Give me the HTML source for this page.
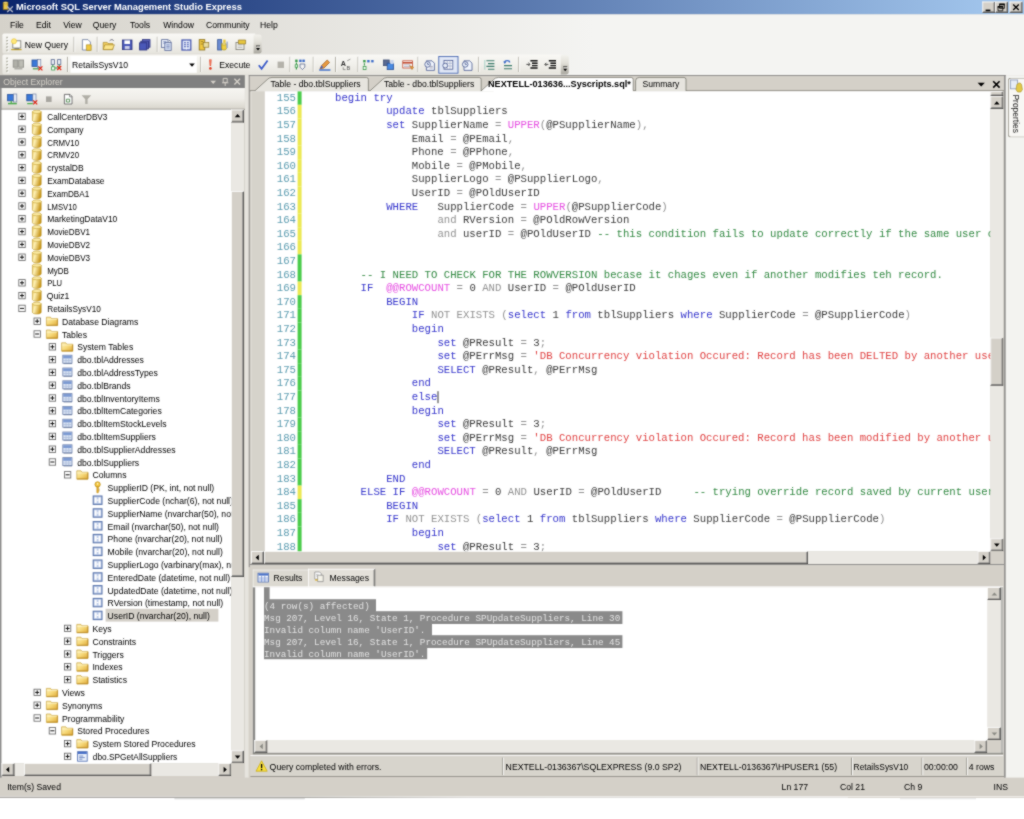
<!DOCTYPE html>
<html><head><meta charset="utf-8"><title>SSMS</title>
<style>
html,body{margin:0;padding:0;background:#fff;overflow:hidden;width:1024px;height:819px;}
#softwrap{position:absolute;left:0;top:0;width:1024px;height:819px;overflow:hidden;filter:url(#soft);}
#root{position:absolute;left:0;top:0;width:1280px;height:1024px;transform:scale(0.8);transform-origin:0 0;background:#fff;overflow:hidden;font-family:"Liberation Sans",sans-serif;font-size:10.8px;color:#000;}
#root div{position:absolute;box-sizing:border-box;}
#root svg{position:absolute;overflow:visible;}
.t{white-space:nowrap;line-height:14px;height:14px;}
.m{white-space:pre;font-family:"Liberation Mono",monospace;}
.sbtn{background:#d4d0c8;border:1px solid;border-color:#fff #404040 #404040 #fff;box-shadow:inset -1px -1px 0 #808080, inset 1px 1px 0 #d4d0c8;}
.track{background:#eae8e3;}
.sunk{border:1px solid;border-color:#808080 #fff #fff #808080;}
.code{color:#3c3c3c}.k{color:#3636cc}.g{color:#929292}.f{color:#e650e2}.c{color:#348a44}.s{color:#e04444}

</style></head>
<body>
<svg width="0" height="0" style="position:absolute"><defs><filter id="soft" x="0" y="0" width="100%" height="100%" color-interpolation-filters="sRGB"><feConvolveMatrix order="3" kernelMatrix="1 2 1 2 13 2 1 2 1" divisor="25" edgeMode="duplicate" preserveAlpha="true"/></filter></defs></svg>
<div id="softwrap"><div id="root">
<div style="left:0px;top:0px;width:1280px;height:997px;background:#d4d0c8;"></div>
<div style="left:0px;top:0px;width:1280px;height:18px;background:linear-gradient(90deg,#0a246a,#a6caf0);"></div>
<svg style="left:2px;top:1px" width="16" height="16" viewBox="0 0 16 16"><path d="M2 2h6v9H2z" fill="#e8c44a" stroke="#8a6a10" stroke-width=".8"/><ellipse cx="5" cy="2.5" rx="3" ry="1.3" fill="#f7e08a" stroke="#8a6a10" stroke-width=".6"/><path d="M7 7l7 7M14 7l-7 7" stroke="#d8dce8" stroke-width="1.6"/><path d="M7 7l7 7M14 7l-7 7" stroke="#606878" stroke-width=".6"/></svg>
<div class="t" style="left:20px;top:2px;color:#fff;font-weight:bold;font-size:11.7px;">Microsoft SQL Server Management Studio Express</div>
<div class="sbtn" style="left:1227.5px;top:2px;width:16px;height:14px;"></div>
<div class="sbtn" style="left:1243.5px;top:2px;width:16px;height:14px;"></div>
<div class="sbtn" style="left:1261.5px;top:2px;width:16px;height:14px;"></div>
<svg style="left:1227.500px;top:2px" width="50" height="14" viewBox="0 0 50 14"><rect x="4" y="10" width="6" height="2" fill="#000"/><path d="M21.5 3.5h6v5h-6z M19.500 6.5h6v5h-6z" fill="#d4d0c8" stroke="#000" stroke-width="1"/><path d="M21 3.500h7M19 6.500h7" stroke="#000" stroke-width="2"/><path d="M38.500 3.500l7 7M45.500 3.500l-7 7" stroke="#000" stroke-width="1.700"/></svg>
<div style="left:0px;top:18px;width:1280px;height:76px;background:linear-gradient(90deg,#d5d2ca 0,#f4f4f2 58%,#f4f4f2 100%);"></div>
<div class="t" style="left:12.5px;top:23.7px;">File</div>
<div class="t" style="left:45px;top:23.7px;">Edit</div>
<div class="t" style="left:79px;top:23.7px;">View</div>
<div class="t" style="left:116px;top:23.7px;">Query</div>
<div class="t" style="left:162.5px;top:23.7px;">Tools</div>
<div class="t" style="left:204px;top:23.7px;">Window</div>
<div class="t" style="left:257.5px;top:23.7px;">Community</div>
<div class="t" style="left:325px;top:23.7px;">Help</div>
<div style="left:3px;top:42px;width:316px;height:25px;background:linear-gradient(#f9f8f5,#f1f0eb 50%,#e6e4dd);border-radius:2px 0 0 2px;"></div>
<div style="left:317px;top:43px;width:10px;height:24px;background:linear-gradient(#f2f1ec,#e2e0d8 40%,#a9a79f);border-radius:0 3px 3px 0;"></div>
<svg style="left:318.500px;top:56px" width="7" height="9" viewBox="0 0 7 9"><path d="M1 1.500h5" stroke="#000"/><path d="M1 4h5l-2.500 3z" fill="#000"/><path d="M2 2.500h5" stroke="#fff" stroke-width=".6"/></svg>
<div style="left:3px;top:68px;width:699px;height:25px;background:linear-gradient(#f9f8f5,#f1f0eb 50%,#e6e4dd);border-radius:2px 0 0 2px;"></div>
<div style="left:701px;top:69px;width:10px;height:24px;background:linear-gradient(#f2f1ec,#e2e0d8 40%,#a9a79f);border-radius:0 3px 3px 0;"></div>
<svg style="left:702.500px;top:82px" width="7" height="9" viewBox="0 0 7 9"><path d="M1 1.500h5" stroke="#000"/><path d="M1 4h5l-2.500 3z" fill="#000"/><path d="M2 2.500h5" stroke="#fff" stroke-width=".6"/></svg>
<div style="left:7.5px;top:46px;width:2px;height:2px;background:#a0a090;"></div>
<div style="left:8.5px;top:47px;width:2px;height:2px;background:#fff;opacity:.8;"></div>
<div style="left:7.5px;top:50px;width:2px;height:2px;background:#a0a090;"></div>
<div style="left:8.5px;top:51px;width:2px;height:2px;background:#fff;opacity:.8;"></div>
<div style="left:7.5px;top:54px;width:2px;height:2px;background:#a0a090;"></div>
<div style="left:8.5px;top:55px;width:2px;height:2px;background:#fff;opacity:.8;"></div>
<div style="left:7.5px;top:58px;width:2px;height:2px;background:#a0a090;"></div>
<div style="left:8.5px;top:59px;width:2px;height:2px;background:#fff;opacity:.8;"></div>
<div style="left:7.5px;top:62px;width:2px;height:2px;background:#a0a090;"></div>
<div style="left:8.5px;top:63px;width:2px;height:2px;background:#fff;opacity:.8;"></div>
<div style="left:7.5px;top:72px;width:2px;height:2px;background:#a0a090;"></div>
<div style="left:8.5px;top:73px;width:2px;height:2px;background:#fff;opacity:.8;"></div>
<div style="left:7.5px;top:76px;width:2px;height:2px;background:#a0a090;"></div>
<div style="left:8.5px;top:77px;width:2px;height:2px;background:#fff;opacity:.8;"></div>
<div style="left:7.5px;top:80px;width:2px;height:2px;background:#a0a090;"></div>
<div style="left:8.5px;top:81px;width:2px;height:2px;background:#fff;opacity:.8;"></div>
<div style="left:7.5px;top:84px;width:2px;height:2px;background:#a0a090;"></div>
<div style="left:8.5px;top:85px;width:2px;height:2px;background:#fff;opacity:.8;"></div>
<div style="left:7.5px;top:88px;width:2px;height:2px;background:#a0a090;"></div>
<div style="left:8.5px;top:89px;width:2px;height:2px;background:#fff;opacity:.8;"></div>
<svg style="left:13.0px;top:47.5px" width="16" height="16" viewBox="0 0 16 16"><rect x="3" y="3" width="10" height="9" fill="#fdfdf8" stroke="#7a7a70"/><path d="M1 14h13" stroke="#c8a830" stroke-width="1.500"/><path d="M5 13h6" stroke="#555" /><circle cx="4.500" cy="3.500" r="3.200" fill="#ffe87a" stroke="#e0b820" stroke-width=".6"/></svg>
<div class="t" style="left:31px;top:48.5px;">New Query</div>
<div style="left:92px;top:46px;width:1px;height:19px;background:#a6a398;"></div>
<div style="left:93px;top:46px;width:1px;height:19px;background:#fff;"></div>
<svg style="left:99.5px;top:47.5px" width="16" height="16" viewBox="0 0 16 16"><path d="M3 1.500h7l3 3v10H3z" fill="#fff" stroke="#6a7a9a"/><path d="M8 8h6v7H8z" fill="#f0c840" stroke="#a88a20" stroke-width=".8"/></svg>
<div style="left:121px;top:46px;width:1px;height:19px;background:#a6a398;"></div>
<div style="left:122px;top:46px;width:1px;height:19px;background:#fff;"></div>
<svg style="left:128.0px;top:47.5px" width="16" height="16" viewBox="0 0 16 16"><path d="M1 5h5l1 1.500h6V14H1z" fill="#f4d060" stroke="#a08020" stroke-width=".8"/><path d="M3 8h12l-2.500 6H1z" fill="#fbe48a" stroke="#a08020" stroke-width=".8"/><path d="M9 3c2-2 4-2 5 0" stroke="#556" fill="none"/></svg>
<svg style="left:151.0px;top:47.5px" width="16" height="16" viewBox="0 0 16 16"><rect x="2" y="2" width="12" height="12" fill="#4a58b8" stroke="#28307a"/><rect x="4.500" y="2.500" width="7" height="4.500" fill="#fff"/><rect x="5" y="9.500" width="6" height="4" fill="#c8cce8"/></svg>
<svg style="left:173.0px;top:47.5px" width="16" height="16" viewBox="0 0 16 16"><rect x="5" y="1.500" width="9.500" height="9.500" fill="#6a70c8" stroke="#28307a"/><rect x="3" y="3.500" width="9.500" height="9.500" fill="#5a62c0" stroke="#28307a"/><rect x="1.500" y="5.500" width="9" height="9" fill="#4a58b8" stroke="#28307a"/></svg>
<div style="left:196px;top:46px;width:1px;height:19px;background:#a6a398;"></div>
<div style="left:197px;top:46px;width:1px;height:19px;background:#fff;"></div>
<svg style="left:199.5px;top:47.5px" width="16" height="16" viewBox="0 0 16 16"><rect x="2" y="1.500" width="8" height="10" fill="#eef2fa" stroke="#5a6a98"/><rect x="6" y="5" width="8" height="10" fill="#d4def2" stroke="#5a6a98"/><path d="M4 4h4M4 6h3M8 8h4M8 10h4M8 12h4" stroke="#6a7ab0" stroke-width=".9"/><path d="M11 2l3 2" stroke="#5a6a98"/></svg>
<svg style="left:224.5px;top:47.5px" width="16" height="16" viewBox="0 0 16 16"><rect x="2.500" y="2" width="11" height="12.500" fill="#dfe8fa" stroke="#4a5ab0" stroke-width="1.600"/><path d="M5 5.500h6M5 8h6M5 10.500h6" stroke="#4a5ab0" stroke-width="1.300"/><path d="M8 3v11" stroke="#fff" stroke-width="1"/></svg>
<svg style="left:247.0px;top:47.5px" width="16" height="16" viewBox="0 0 16 16"><rect x="2" y="1.500" width="7" height="13" fill="#f0c840" stroke="#8a7020"/><rect x="7" y="5" width="7" height="6" fill="#e8dca0" stroke="#8a7020" stroke-width=".8"/><path d="M4 4h3M4 7h3" stroke="#8a7020"/></svg>
<svg style="left:269.5px;top:47.5px" width="16" height="16" viewBox="0 0 16 16"><rect x="2" y="1.500" width="5" height="13" fill="#6a8ad0" stroke="#3a5a98"/><path d="M7 7v6c0 2 6 2 6 0V7z" fill="#f0d040" stroke="#a08a20" stroke-width=".8"/><ellipse cx="10" cy="7" rx="3" ry="1.300" fill="#f8e890" stroke="#a08a20" stroke-width=".6"/><rect x="9" y="1.500" width="3" height="4" fill="#e8c840"/><rect x="13" y="4" width="2" height="8" fill="#a8b4d0"/></svg>
<svg style="left:293.0px;top:47.5px" width="16" height="16" viewBox="0 0 16 16"><rect x="2" y="5" width="10" height="9" fill="#f4f4f0" stroke="#7a7a70"/><path d="M5 2h9v5H5z" fill="#e8c840" stroke="#8a7020" stroke-width=".8"/><path d="M4 8h6M4 11h6" stroke="#999"/></svg>
<svg style="left:15.0px;top:72.5px" width="16" height="16" viewBox="0 0 16 16"><rect x="1.500" y="2" width="6" height="9" fill="#b0b0a8" stroke="#8a8a84"/><rect x="8.500" y="2" width="6" height="9" fill="#bcbcb4" stroke="#8a8a84"/><path d="M3 13h10" stroke="#a0a098" stroke-width="1.500"/></svg>
<svg style="left:38.0px;top:72.5px" width="16" height="16" viewBox="0 0 16 16"><rect x="2" y="2" width="8" height="8" fill="#3a78d8" stroke="#285098"/><rect x="9" y="1.500" width="4" height="10" fill="#e8ecf4" stroke="#6a7aa0" stroke-width=".8"/><path d="M3 13h8" stroke="#4a9a4a" stroke-width="1.500"/><path d="M10 10l5 5M15 10l-5 5" stroke="#e02818" stroke-width="1.600"/></svg>
<svg style="left:62.0px;top:72.5px" width="16" height="16" viewBox="0 0 16 16"><rect x="2" y="1.500" width="4" height="6" fill="#e8ecf4" stroke="#5a6a90"/><rect x="10" y="1.500" width="4" height="6" fill="#e8ecf4" stroke="#5a6a90"/><path d="M4 8v4h8V8" stroke="#3a9a4a" fill="none" stroke-width="1.300"/><rect x="2.500" y="10.500" width="4" height="4" fill="#fff" stroke="#3a9a4a"/><path d="M9.500 9.500l5 5M14.500 9.500l-5 5" stroke="#e02818" stroke-width="1.600"/></svg>
<div style="left:84px;top:71px;width:1px;height:19px;background:#a6a398;"></div>
<div style="left:85px;top:71px;width:1px;height:19px;background:#fff;"></div>
<div style="left:88px;top:70px;width:157.5px;height:21px;background:#fff;"></div>
<div class="t" style="left:90px;top:73.5px;">RetailsSysV10</div>
<svg style="left:236px;top:79px" width="8" height="5" viewBox="0 0 8 5"><path d="M0.500 0.500h7l-3.500 4z" fill="#000"/></svg>
<div style="left:249.5px;top:71px;width:1px;height:19px;background:#a6a398;"></div>
<div style="left:250.5px;top:71px;width:1px;height:19px;background:#fff;"></div>
<svg style="left:254.5px;top:72.5px" width="16" height="16" viewBox="0 0 16 16"><path d="M6.500 1.500h3l-.7 8h-1.600z" fill="#e03a20"/><circle cx="8" cy="12.500" r="1.600" fill="#e03a20"/><path d="M7 2h1l-.2 7" stroke="#f8a080" stroke-width=".8" fill="none"/></svg>
<div class="t" style="left:274px;top:73.5px;">Execute</div>
<svg style="left:321.0px;top:72.5px" width="16" height="16" viewBox="0 0 16 16"><path d="M2.500 8.500l3.500 4.500L13.500 2.500" stroke="#3a5ac8" stroke-width="2.200" fill="none"/></svg>
<svg style="left:343.0px;top:72.5px" width="16" height="16" viewBox="0 0 16 16"><rect x="4" y="4" width="8" height="8" fill="#b4b2aa"/></svg>
<div style="left:362px;top:71px;width:1px;height:19px;background:#a6a398;"></div>
<div style="left:363px;top:71px;width:1px;height:19px;background:#fff;"></div>
<svg style="left:367.0px;top:72.5px" width="16" height="16" viewBox="0 0 16 16"><rect x="2" y="1.500" width="3" height="3" fill="#3a9a4a"/><rect x="7" y="1.500" width="3" height="3" fill="#3a6ac8"/><rect x="11" y="1.500" width="3" height="3" fill="#3a6ac8"/><path d="M3.500 5v3M3.500 10v4" stroke="#3a9a4a" stroke-width="1.500"/><rect x="2" y="8" width="3" height="3" fill="#fff" stroke="#3a9a4a"/><path d="M8 7h6v4l-3 3-3-3z" fill="#f4f4f4" stroke="#5a6a90"/></svg>
<div style="left:391px;top:71px;width:1px;height:19px;background:#a6a398;"></div>
<div style="left:392px;top:71px;width:1px;height:19px;background:#fff;"></div>
<svg style="left:397.5px;top:72.5px" width="16" height="16" viewBox="0 0 16 16"><path d="M2 13l2-4 7-7 3 3-7 7z" fill="#e89a40" stroke="#8a4a10" stroke-width=".8"/><path d="M1 14.500h14" stroke="#3a6ac8" stroke-width="1.800"/><path d="M2 13l2-4 2 2z" fill="#3a5ac8"/></svg>
<div style="left:419px;top:71px;width:1px;height:19px;background:#a6a398;"></div>
<div style="left:420px;top:71px;width:1px;height:19px;background:#fff;"></div>
<svg style="left:424.5px;top:72.5px" width="16" height="16" viewBox="0 0 16 16"><text x="1" y="9" font-family="Liberation Sans" font-size="9" font-weight="bold" fill="#333">A</text><text x="8" y="15" font-family="Liberation Sans" font-size="7" fill="#555">B</text><path d="M9 3l4-2M4 11v3h3" stroke="#666" stroke-width=".8" fill="none"/></svg>
<div style="left:447px;top:71px;width:1px;height:19px;background:#a6a398;"></div>
<div style="left:448px;top:71px;width:1px;height:19px;background:#fff;"></div>
<svg style="left:452.0px;top:72.5px" width="16" height="16" viewBox="0 0 16 16"><rect x="2" y="2" width="3" height="3" fill="#3a9a4a"/><rect x="7" y="2" width="3" height="3" fill="#3a6ac8"/><rect x="12" y="2" width="3" height="3" fill="#3a6ac8"/><path d="M3.500 6v3" stroke="#3a9a4a" stroke-width="1.400"/><rect x="2" y="10" width="3.500" height="4" fill="#fff" stroke="#3a9a4a"/></svg>
<svg style="left:477.5px;top:72.5px" width="16" height="16" viewBox="0 0 16 16"><rect x="1.500" y="2" width="7" height="7" fill="#5a6a90" stroke="#3a4a70"/><rect x="6" y="6" width="8" height="8" fill="#4a8ae0" stroke="#285098"/><rect x="10" y="2" width="4" height="5" fill="#c8d4ec"/></svg>
<svg style="left:501.5px;top:72.5px" width="16" height="16" viewBox="0 0 16 16"><rect x="1.500" y="3" width="12" height="9" fill="#fff" stroke="#c04a30"/><path d="M1.500 5.500h12" stroke="#c04a30" stroke-width="2"/><path d="M3 8h8M3 10h8" stroke="#aab"/><path d="M10 9l3 5 2-3z" fill="#e8a040" stroke="#a05a10" stroke-width=".6"/></svg>
<div style="left:522px;top:71px;width:1px;height:19px;background:#a6a398;"></div>
<div style="left:523px;top:71px;width:1px;height:19px;background:#fff;"></div>
<svg style="left:529.0px;top:72.5px" width="16" height="16" viewBox="0 0 16 16"><path d="M4 3h7l3 3v9H4z" fill="#f0f4fc" stroke="#4a5a90"/><circle cx="5.500" cy="7.500" r="3.500" fill="#e8eef8" stroke="#4a5a90"/><path d="M5.500 5.500v2h2" stroke="#4a5a90" fill="none"/><path d="M8 10h4M8 12h4" stroke="#99a"/></svg>
<div style="left:548px;top:69.5px;width:25px;height:22px;background:#dfe6f5;border:1px solid #3a5aa8;"></div>
<svg style="left:552.0px;top:72.5px" width="16" height="16" viewBox="0 0 16 16"><rect x="3" y="2.500" width="11" height="11" fill="#fff" stroke="#4a5a90"/><path d="M3 6h11M3 9.500h11M7 2.500v11M10.500 2.500v11" stroke="#8a9ac0" stroke-width=".8"/><circle cx="4.500" cy="9" r="3" fill="#e8eef8" stroke="#4a5a90"/></svg>
<svg style="left:576.0px;top:72.5px" width="16" height="16" viewBox="0 0 16 16"><path d="M4 3h7l3 3v9H4z" fill="#f0f4fc" stroke="#4a5a90"/><circle cx="5.500" cy="7.500" r="3.500" fill="#e8eef8" stroke="#4a5a90"/><path d="M5.500 5.500v2h2" stroke="#4a5a90" fill="none"/></svg>
<div style="left:598px;top:71px;width:1px;height:19px;background:#a6a398;"></div>
<div style="left:599px;top:71px;width:1px;height:19px;background:#fff;"></div>
<svg style="left:604.0px;top:72.5px" width="16" height="16" viewBox="0 0 16 16"><path d="M4 3h10M6 6.500h8M4 10h10M6 13.500h8" stroke="#3a7a6a" stroke-width="1.400"/><path d="M2 2v12" stroke="#7ac0b0" stroke-width=".8"/></svg>
<svg style="left:626.0px;top:72.5px" width="16" height="16" viewBox="0 0 16 16"><path d="M4 9h10M4 13h10" stroke="#3a7a6a" stroke-width="1.400"/><path d="M11 5c0-3-6-3-6 0" stroke="#3a6ac8" stroke-width="1.600" fill="none"/><path d="M3 4l2 3 2-3z" fill="#3a6ac8"/></svg>
<div style="left:648px;top:71px;width:1px;height:19px;background:#a6a398;"></div>
<div style="left:649px;top:71px;width:1px;height:19px;background:#fff;"></div>
<svg style="left:657.0px;top:72.5px" width="16" height="16" viewBox="0 0 16 16"><path d="M6 3h9M8 6h7M8 9h7M6 12h9" stroke="#111" stroke-width="1.800"/><path d="M1 7.500h4M3.500 5.500l2 2-2 2" stroke="#222" fill="none"/></svg>
<svg style="left:679.5px;top:72.5px" width="16" height="16" viewBox="0 0 16 16"><path d="M6 3h9M8 6h7M8 9h7M6 12h9" stroke="#111" stroke-width="1.800"/><path d="M1.500 7.500h4M3 5.500l-2 2 2 2" stroke="#222" fill="none"/></svg>
<div style="left:0px;top:972px;width:1280px;height:25px;background:#d4d0c8;"></div>
<div style="left:0px;top:995px;width:1280px;height:1px;background:#f4f3f0;"></div>
<div style="left:0px;top:996px;width:380px;height:1.4px;background:#8c8c88;"></div>
<div style="left:380px;top:996px;width:680px;height:1.4px;background:linear-gradient(90deg,#8c8c88,#ddd 30%,#eee);"></div>
<div class="t" style="left:9px;top:977px;">Item(s) Saved</div>
<div class="t" style="left:977px;top:977px;">Ln 177</div>
<div class="t" style="left:1050px;top:977px;">Col 21</div>
<div class="t" style="left:1130px;top:977px;">Ch 9</div>
<div class="t" style="left:1242px;top:977px;">INS</div>
<div style="left:218px;top:997.5px;width:163px;height:1.5px;background:#aaa;opacity:.7;"></div>
<div style="left:1125px;top:997.5px;width:95px;height:1.2px;background:#ccc;opacity:.7;"></div>
<div style="left:1257px;top:94px;width:23px;height:878px;background:#f3f3f0;"></div>
<div style="left:1260px;top:97px;width:22px;height:75px;background:#f8f7f4;border:1px solid #9a978c;border-right:none;border-radius:4px 0 0 4px;"></div>
<svg style="left:1262px;top:99px" width="18" height="18" viewBox="0 0 18 18"><rect x="1" y="1" width="9" height="11" fill="#e6ecf6" stroke="#8a9ab8"/><path d="M9 7c2-3 5-3 6 0l1 6-2 3h-4l-2-3z" fill="#e2c84a" stroke="#a08a20" stroke-width=".7"/></svg>
<div class="t" style="left:1263px;top:118px;transform:rotate(90deg);transform-origin:0 0;margin-left:14px;font-size:10.6px;color:#222;">Properties</div>
<div style="left:0px;top:94px;width:308px;height:878px;background:#d4d0c8;"></div>
<div style="left:306px;top:94px;width:5px;height:878px;background:#e6e4de;"></div>
<div style="left:0px;top:94px;width:306px;height:16px;background:#808080;"></div>
<div class="t" style="left:4px;top:95px;color:#d4d0c8;">Object Explorer</div>
<svg style="left:262px;top:97px" width="44" height="11" viewBox="0 0 44 11"><path d="M1 4h7l-3.500 4z" fill="#d4d0c8"/><path d="M17 1h5v5h-5zM15.500 6.500h8M19.500 6.500v4" stroke="#d4d0c8" fill="none" stroke-width="1.200"/><path d="M31 1.500l7 7M38 1.500l-7 7" stroke="#d4d0c8" stroke-width="1.700"/></svg>
<div style="left:0px;top:110px;width:306px;height:27px;background:linear-gradient(#f6f5f1,#efede8 50%,#d6d3ca);"></div>
<div style="left:0px;top:135.5px;width:306px;height:1.5px;background:#77756f;"></div>
<div style="left:0px;top:110px;width:2px;height:862px;background:#8e8e8e;"></div>
<svg style="left:8.0px;top:116.0px" width="16" height="16" viewBox="0 0 16 16"><rect x="1.500" y="2" width="8" height="8" fill="#3a78d8" stroke="#285098"/><rect x="9" y="1.500" width="4" height="10" fill="#e8ecf4" stroke="#6a7aa0" stroke-width=".8"/><path d="M2 13.500h11" stroke="#4aaa4a" stroke-width="1.800"/><path d="M6 10v3" stroke="#4aaa4a" stroke-width="1.500"/></svg>
<svg style="left:32.0px;top:116.0px" width="16" height="16" viewBox="0 0 16 16"><rect x="1.500" y="2" width="8" height="8" fill="#3a78d8" stroke="#285098"/><rect x="9" y="1.500" width="4" height="10" fill="#e8ecf4" stroke="#6a7aa0" stroke-width=".8"/><path d="M2 13.500h7" stroke="#4aaa4a" stroke-width="1.500"/><path d="M9.500 9.500l5 5M14.500 9.500l-5 5" stroke="#e02818" stroke-width="1.600"/></svg>
<svg style="left:53.0px;top:116.0px" width="16" height="16" viewBox="0 0 16 16"><rect x="4.500" y="4.500" width="7" height="7" fill="#a8a6a0"/></svg>
<svg style="left:77.0px;top:116.0px" width="16" height="16" viewBox="0 0 16 16"><path d="M3.500 2h7l2.500 2.500V14h-9.500z" fill="#fff" stroke="#555"/><path d="M6 8h4v3.500H6z" fill="none" stroke="#3a7a3a"/><path d="M10 2v3h3" fill="none" stroke="#555" stroke-width=".8"/></svg>
<svg style="left:99.5px;top:116.0px" width="16" height="16" viewBox="0 0 16 16"><path d="M2 3h12l-4.500 5v6h-3V8z" fill="#b0aea6"/></svg>
<div style="left:2px;top:137px;width:287px;height:817px;background:#fff;"></div>
<div class="track" style="left:289px;top:137px;width:16px;height:817px;"></div>
<div class="sbtn" style="left:289px;top:137px;width:16px;height:16px;"></div>
<div class="sbtn" style="left:289px;top:938px;width:16px;height:16px;"></div>
<div class="sbtn" style="left:289px;top:239px;width:16px;height:482px;"></div>
<svg style="left:293px;top:142px" width="8" height="5" viewBox="0 0 8 5"><path d="M0.500 4.500h7l-3.500-4z" fill="#000"/></svg>
<svg style="left:293px;top:944px" width="8" height="5" viewBox="0 0 8 5"><path d="M0.500 0.500h7l-3.500 4z" fill="#000"/></svg>
<div class="track" style="left:2px;top:954px;width:287px;height:16px;"></div>
<div class="sbtn" style="left:2px;top:954px;width:16px;height:16px;"></div>
<div class="sbtn" style="left:273px;top:954px;width:16px;height:16px;"></div>
<div class="sbtn" style="left:30px;top:954px;width:159px;height:16px;"></div>
<svg style="left:7px;top:958px" width="5" height="8" viewBox="0 0 5 8"><path d="M4.500 0.500v7l-4-3.500z" fill="#000"/></svg>
<svg style="left:279px;top:958px" width="5" height="8" viewBox="0 0 5 8"><path d="M0.500 0.500v7l4-3.500z" fill="#000"/></svg>
<div style="left:289px;top:954px;width:16px;height:16px;background:#d4d0c8;"></div>
<svg width="0" height="0" style="left:0;top:0"><defs><linearGradient id="gdb" x1="0" x2="1" y1="0" y2="0.300"><stop offset="0" stop-color="#f2d060"/><stop offset=".35" stop-color="#fdf0b4"/><stop offset="1" stop-color="#c8961c"/></linearGradient><linearGradient id="gfo" x1="0" x2="1" y1="0" y2="1"><stop offset="0" stop-color="#fff4c0"/><stop offset=".5" stop-color="#f6d878"/><stop offset="1" stop-color="#dca636"/></linearGradient></defs></svg>
<div style="left:2px;top:137px;width:287px;height:817px;overflow:hidden;">
<svg style="left:21px;top:4px" width="9" height="9" viewBox="0 0 9 9"><rect x=".5" y=".5" width="8" height="8" fill="#fff" stroke="#606060"/><path d="M2 4.500h5M4.500 2v5" stroke="#000" stroke-width="1.200"/></svg>
<svg style="left:36px;top:0px" width="16" height="16" viewBox="0 0 16 16"><path d="M2.500 2.800v10.400c0 1.500 2.400 2.300 5.500 2.300s5.500-.8 5.500-2.300V2.800z" fill="url(#gdb)" stroke="#b8901c" stroke-width=".7"/><ellipse cx="8" cy="2.800" rx="5.500" ry="2" fill="#fbeaa4" stroke="#c09a28" stroke-width=".7"/></svg>
<div class="t" style="left:56.5px;top:2px;transform:scaleX(0.95);transform-origin:0 0;">CallCenterDBV3</div>
<svg style="left:21px;top:20px" width="9" height="9" viewBox="0 0 9 9"><rect x=".5" y=".5" width="8" height="8" fill="#fff" stroke="#606060"/><path d="M2 4.500h5M4.500 2v5" stroke="#000" stroke-width="1.200"/></svg>
<svg style="left:36px;top:16px" width="16" height="16" viewBox="0 0 16 16"><path d="M2.500 2.800v10.400c0 1.500 2.400 2.300 5.500 2.300s5.500-.8 5.500-2.300V2.800z" fill="url(#gdb)" stroke="#b8901c" stroke-width=".7"/><ellipse cx="8" cy="2.800" rx="5.500" ry="2" fill="#fbeaa4" stroke="#c09a28" stroke-width=".7"/></svg>
<div class="t" style="left:56.5px;top:18px;transform:scaleX(0.985);transform-origin:0 0;">Company</div>
<svg style="left:21px;top:36px" width="9" height="9" viewBox="0 0 9 9"><rect x=".5" y=".5" width="8" height="8" fill="#fff" stroke="#606060"/><path d="M2 4.500h5M4.500 2v5" stroke="#000" stroke-width="1.200"/></svg>
<svg style="left:36px;top:32px" width="16" height="16" viewBox="0 0 16 16"><path d="M2.500 2.800v10.400c0 1.500 2.400 2.300 5.500 2.300s5.500-.8 5.500-2.300V2.800z" fill="url(#gdb)" stroke="#b8901c" stroke-width=".7"/><ellipse cx="8" cy="2.800" rx="5.500" ry="2" fill="#fbeaa4" stroke="#c09a28" stroke-width=".7"/></svg>
<div class="t" style="left:56.5px;top:34px;transform:scaleX(0.91);transform-origin:0 0;">CRMV10</div>
<svg style="left:21px;top:52px" width="9" height="9" viewBox="0 0 9 9"><rect x=".5" y=".5" width="8" height="8" fill="#fff" stroke="#606060"/><path d="M2 4.500h5M4.500 2v5" stroke="#000" stroke-width="1.200"/></svg>
<svg style="left:36px;top:48px" width="16" height="16" viewBox="0 0 16 16"><path d="M2.500 2.800v10.400c0 1.500 2.400 2.300 5.500 2.300s5.500-.8 5.500-2.300V2.800z" fill="url(#gdb)" stroke="#b8901c" stroke-width=".7"/><ellipse cx="8" cy="2.800" rx="5.500" ry="2" fill="#fbeaa4" stroke="#c09a28" stroke-width=".7"/></svg>
<div class="t" style="left:56.5px;top:50px;transform:scaleX(0.91);transform-origin:0 0;">CRMV20</div>
<svg style="left:21px;top:68px" width="9" height="9" viewBox="0 0 9 9"><rect x=".5" y=".5" width="8" height="8" fill="#fff" stroke="#606060"/><path d="M2 4.500h5M4.500 2v5" stroke="#000" stroke-width="1.200"/></svg>
<svg style="left:36px;top:64px" width="16" height="16" viewBox="0 0 16 16"><path d="M2.500 2.800v10.400c0 1.500 2.400 2.300 5.500 2.300s5.500-.8 5.500-2.300V2.800z" fill="url(#gdb)" stroke="#b8901c" stroke-width=".7"/><ellipse cx="8" cy="2.800" rx="5.500" ry="2" fill="#fbeaa4" stroke="#c09a28" stroke-width=".7"/></svg>
<div class="t" style="left:56.5px;top:66px;transform:scaleX(0.985);transform-origin:0 0;">crystalDB</div>
<svg style="left:21px;top:84px" width="9" height="9" viewBox="0 0 9 9"><rect x=".5" y=".5" width="8" height="8" fill="#fff" stroke="#606060"/><path d="M2 4.500h5M4.500 2v5" stroke="#000" stroke-width="1.200"/></svg>
<svg style="left:36px;top:80px" width="16" height="16" viewBox="0 0 16 16"><path d="M2.500 2.800v10.400c0 1.500 2.400 2.300 5.500 2.300s5.500-.8 5.500-2.300V2.800z" fill="url(#gdb)" stroke="#b8901c" stroke-width=".7"/><ellipse cx="8" cy="2.800" rx="5.500" ry="2" fill="#fbeaa4" stroke="#c09a28" stroke-width=".7"/></svg>
<div class="t" style="left:56.5px;top:82px;transform:scaleX(0.97);transform-origin:0 0;">ExamDatabase</div>
<svg style="left:21px;top:100px" width="9" height="9" viewBox="0 0 9 9"><rect x=".5" y=".5" width="8" height="8" fill="#fff" stroke="#606060"/><path d="M2 4.500h5M4.500 2v5" stroke="#000" stroke-width="1.200"/></svg>
<svg style="left:36px;top:96px" width="16" height="16" viewBox="0 0 16 16"><path d="M2.500 2.800v10.400c0 1.500 2.400 2.300 5.500 2.300s5.500-.8 5.500-2.300V2.800z" fill="url(#gdb)" stroke="#b8901c" stroke-width=".7"/><ellipse cx="8" cy="2.800" rx="5.500" ry="2" fill="#fbeaa4" stroke="#c09a28" stroke-width=".7"/></svg>
<div class="t" style="left:56.5px;top:98px;transform:scaleX(0.94);transform-origin:0 0;">ExamDBA1</div>
<svg style="left:21px;top:116px" width="9" height="9" viewBox="0 0 9 9"><rect x=".5" y=".5" width="8" height="8" fill="#fff" stroke="#606060"/><path d="M2 4.500h5M4.500 2v5" stroke="#000" stroke-width="1.200"/></svg>
<svg style="left:36px;top:112px" width="16" height="16" viewBox="0 0 16 16"><path d="M2.500 2.800v10.400c0 1.500 2.400 2.300 5.500 2.300s5.500-.8 5.500-2.300V2.800z" fill="url(#gdb)" stroke="#b8901c" stroke-width=".7"/><ellipse cx="8" cy="2.800" rx="5.500" ry="2" fill="#fbeaa4" stroke="#c09a28" stroke-width=".7"/></svg>
<div class="t" style="left:56.5px;top:114px;transform:scaleX(0.89);transform-origin:0 0;">LMSV10</div>
<svg style="left:21px;top:132px" width="9" height="9" viewBox="0 0 9 9"><rect x=".5" y=".5" width="8" height="8" fill="#fff" stroke="#606060"/><path d="M2 4.500h5M4.500 2v5" stroke="#000" stroke-width="1.200"/></svg>
<svg style="left:36px;top:128px" width="16" height="16" viewBox="0 0 16 16"><path d="M2.500 2.800v10.400c0 1.500 2.400 2.300 5.500 2.300s5.500-.8 5.500-2.300V2.800z" fill="url(#gdb)" stroke="#b8901c" stroke-width=".7"/><ellipse cx="8" cy="2.800" rx="5.500" ry="2" fill="#fbeaa4" stroke="#c09a28" stroke-width=".7"/></svg>
<div class="t" style="left:56.5px;top:130px;transform:scaleX(0.98);transform-origin:0 0;">MarketingDataV10</div>
<svg style="left:21px;top:148px" width="9" height="9" viewBox="0 0 9 9"><rect x=".5" y=".5" width="8" height="8" fill="#fff" stroke="#606060"/><path d="M2 4.500h5M4.500 2v5" stroke="#000" stroke-width="1.200"/></svg>
<svg style="left:36px;top:144px" width="16" height="16" viewBox="0 0 16 16"><path d="M2.500 2.800v10.400c0 1.500 2.400 2.300 5.500 2.300s5.500-.8 5.500-2.300V2.800z" fill="url(#gdb)" stroke="#b8901c" stroke-width=".7"/><ellipse cx="8" cy="2.800" rx="5.500" ry="2" fill="#fbeaa4" stroke="#c09a28" stroke-width=".7"/></svg>
<div class="t" style="left:56.5px;top:146px;transform:scaleX(0.94);transform-origin:0 0;">MovieDBV1</div>
<svg style="left:21px;top:164px" width="9" height="9" viewBox="0 0 9 9"><rect x=".5" y=".5" width="8" height="8" fill="#fff" stroke="#606060"/><path d="M2 4.500h5M4.500 2v5" stroke="#000" stroke-width="1.200"/></svg>
<svg style="left:36px;top:160px" width="16" height="16" viewBox="0 0 16 16"><path d="M2.500 2.800v10.400c0 1.500 2.400 2.300 5.500 2.300s5.500-.8 5.500-2.300V2.800z" fill="url(#gdb)" stroke="#b8901c" stroke-width=".7"/><ellipse cx="8" cy="2.800" rx="5.500" ry="2" fill="#fbeaa4" stroke="#c09a28" stroke-width=".7"/></svg>
<div class="t" style="left:56.5px;top:162px;transform:scaleX(0.94);transform-origin:0 0;">MovieDBV2</div>
<svg style="left:21px;top:180px" width="9" height="9" viewBox="0 0 9 9"><rect x=".5" y=".5" width="8" height="8" fill="#fff" stroke="#606060"/><path d="M2 4.500h5M4.500 2v5" stroke="#000" stroke-width="1.200"/></svg>
<svg style="left:36px;top:176px" width="16" height="16" viewBox="0 0 16 16"><path d="M2.500 2.800v10.400c0 1.500 2.400 2.300 5.500 2.300s5.500-.8 5.500-2.300V2.800z" fill="url(#gdb)" stroke="#b8901c" stroke-width=".7"/><ellipse cx="8" cy="2.800" rx="5.500" ry="2" fill="#fbeaa4" stroke="#c09a28" stroke-width=".7"/></svg>
<div class="t" style="left:56.5px;top:178px;transform:scaleX(0.94);transform-origin:0 0;">MovieDBV3</div>
<svg style="left:36px;top:192px" width="16" height="16" viewBox="0 0 16 16"><path d="M2.500 2.800v10.400c0 1.500 2.400 2.300 5.500 2.300s5.500-.8 5.500-2.300V2.800z" fill="url(#gdb)" stroke="#b8901c" stroke-width=".7"/><ellipse cx="8" cy="2.800" rx="5.500" ry="2" fill="#fbeaa4" stroke="#c09a28" stroke-width=".7"/></svg>
<div class="t" style="left:56.5px;top:194px;transform:scaleX(0.92);transform-origin:0 0;">MyDB</div>
<svg style="left:21px;top:212px" width="9" height="9" viewBox="0 0 9 9"><rect x=".5" y=".5" width="8" height="8" fill="#fff" stroke="#606060"/><path d="M2 4.500h5M4.500 2v5" stroke="#000" stroke-width="1.200"/></svg>
<svg style="left:36px;top:208px" width="16" height="16" viewBox="0 0 16 16"><path d="M2.500 2.800v10.400c0 1.500 2.400 2.300 5.500 2.300s5.500-.8 5.500-2.300V2.800z" fill="url(#gdb)" stroke="#b8901c" stroke-width=".7"/><ellipse cx="8" cy="2.800" rx="5.500" ry="2" fill="#fbeaa4" stroke="#c09a28" stroke-width=".7"/></svg>
<div class="t" style="left:56.5px;top:210px;transform:scaleX(0.88);transform-origin:0 0;">PLU</div>
<svg style="left:21px;top:228px" width="9" height="9" viewBox="0 0 9 9"><rect x=".5" y=".5" width="8" height="8" fill="#fff" stroke="#606060"/><path d="M2 4.500h5M4.500 2v5" stroke="#000" stroke-width="1.200"/></svg>
<svg style="left:36px;top:224px" width="16" height="16" viewBox="0 0 16 16"><path d="M2.500 2.800v10.400c0 1.500 2.400 2.300 5.500 2.300s5.500-.8 5.500-2.300V2.800z" fill="url(#gdb)" stroke="#b8901c" stroke-width=".7"/><ellipse cx="8" cy="2.800" rx="5.500" ry="2" fill="#fbeaa4" stroke="#c09a28" stroke-width=".7"/></svg>
<div class="t" style="left:56.5px;top:226px;">Quiz1</div>
<svg style="left:21px;top:244px" width="9" height="9" viewBox="0 0 9 9"><rect x=".5" y=".5" width="8" height="8" fill="#fff" stroke="#606060"/><path d="M2 4.500h5" stroke="#000" stroke-width="1.200"/></svg>
<svg style="left:36px;top:240px" width="16" height="16" viewBox="0 0 16 16"><path d="M2.500 2.800v10.400c0 1.500 2.400 2.300 5.500 2.300s5.500-.8 5.500-2.300V2.800z" fill="url(#gdb)" stroke="#b8901c" stroke-width=".7"/><ellipse cx="8" cy="2.800" rx="5.500" ry="2" fill="#fbeaa4" stroke="#c09a28" stroke-width=".7"/></svg>
<div class="t" style="left:56.5px;top:242px;transform:scaleX(0.955);transform-origin:0 0;">RetailsSysV10</div>
<svg style="left:40px;top:260px" width="9" height="9" viewBox="0 0 9 9"><rect x=".5" y=".5" width="8" height="8" fill="#fff" stroke="#606060"/><path d="M2 4.500h5M4.500 2v5" stroke="#000" stroke-width="1.200"/></svg>
<svg style="left:55px;top:256px" width="16" height="16" viewBox="0 0 16 16"><path d="M1 3.500h5.200l1.300 1.800H15V14H1z" fill="url(#gfo)" stroke="#c29a30" stroke-width=".8"/><path d="M1.500 6.200h13" stroke="#fff6cc" stroke-width=".9"/><path d="M1.500 13.600h13.200V6" stroke="#b88620" stroke-width=".9" fill="none"/></svg>
<div class="t" style="left:75.5px;top:258px;">Database Diagrams</div>
<svg style="left:40px;top:276px" width="9" height="9" viewBox="0 0 9 9"><rect x=".5" y=".5" width="8" height="8" fill="#fff" stroke="#606060"/><path d="M2 4.500h5" stroke="#000" stroke-width="1.200"/></svg>
<svg style="left:55px;top:272px" width="16" height="16" viewBox="0 0 16 16"><path d="M1 3.500h5.200l1.300 1.800H15V14H1z" fill="url(#gfo)" stroke="#c29a30" stroke-width=".8"/><path d="M1.500 6.200h13" stroke="#fff6cc" stroke-width=".9"/><path d="M1.500 13.600h13.200V6" stroke="#b88620" stroke-width=".9" fill="none"/></svg>
<div class="t" style="left:75.5px;top:274px;">Tables</div>
<svg style="left:59px;top:292px" width="9" height="9" viewBox="0 0 9 9"><rect x=".5" y=".5" width="8" height="8" fill="#fff" stroke="#606060"/><path d="M2 4.500h5M4.500 2v5" stroke="#000" stroke-width="1.200"/></svg>
<svg style="left:74px;top:288px" width="16" height="16" viewBox="0 0 16 16"><path d="M1 3.500h5.200l1.300 1.800H15V14H1z" fill="url(#gfo)" stroke="#c29a30" stroke-width=".8"/><path d="M1.500 6.200h13" stroke="#fff6cc" stroke-width=".9"/><path d="M1.500 13.600h13.200V6" stroke="#b88620" stroke-width=".9" fill="none"/></svg>
<div class="t" style="left:94.5px;top:290px;">System Tables</div>
<svg style="left:59px;top:308px" width="9" height="9" viewBox="0 0 9 9"><rect x=".5" y=".5" width="8" height="8" fill="#fff" stroke="#606060"/><path d="M2 4.500h5M4.500 2v5" stroke="#000" stroke-width="1.200"/></svg>
<svg style="left:74px;top:304px" width="16" height="16" viewBox="0 0 16 16"><rect x="2.500" y="3" width="11.500" height="10" fill="#dde6f5" stroke="#6f82ac" stroke-width="1"/><rect x="3" y="3.500" width="10.500" height="3.500" fill="#7c9ad2"/><path d="M3 9.800h10.500M6.500 7v6M10 7v6" stroke="#a4b6d8" stroke-width=".9"/><path d="M3.500 13.500h10.500" stroke="#56688e" stroke-width=".8"/></svg>
<div class="t" style="left:94.5px;top:306px;">dbo.tblAddresses</div>
<svg style="left:59px;top:324px" width="9" height="9" viewBox="0 0 9 9"><rect x=".5" y=".5" width="8" height="8" fill="#fff" stroke="#606060"/><path d="M2 4.500h5M4.500 2v5" stroke="#000" stroke-width="1.200"/></svg>
<svg style="left:74px;top:320px" width="16" height="16" viewBox="0 0 16 16"><rect x="2.500" y="3" width="11.500" height="10" fill="#dde6f5" stroke="#6f82ac" stroke-width="1"/><rect x="3" y="3.500" width="10.500" height="3.500" fill="#7c9ad2"/><path d="M3 9.800h10.500M6.500 7v6M10 7v6" stroke="#a4b6d8" stroke-width=".9"/><path d="M3.500 13.500h10.500" stroke="#56688e" stroke-width=".8"/></svg>
<div class="t" style="left:94.5px;top:322px;">dbo.tblAddressTypes</div>
<svg style="left:59px;top:340px" width="9" height="9" viewBox="0 0 9 9"><rect x=".5" y=".5" width="8" height="8" fill="#fff" stroke="#606060"/><path d="M2 4.500h5M4.500 2v5" stroke="#000" stroke-width="1.200"/></svg>
<svg style="left:74px;top:336px" width="16" height="16" viewBox="0 0 16 16"><rect x="2.500" y="3" width="11.500" height="10" fill="#dde6f5" stroke="#6f82ac" stroke-width="1"/><rect x="3" y="3.500" width="10.500" height="3.500" fill="#7c9ad2"/><path d="M3 9.800h10.500M6.500 7v6M10 7v6" stroke="#a4b6d8" stroke-width=".9"/><path d="M3.500 13.500h10.500" stroke="#56688e" stroke-width=".8"/></svg>
<div class="t" style="left:94.5px;top:338px;">dbo.tblBrands</div>
<svg style="left:59px;top:356px" width="9" height="9" viewBox="0 0 9 9"><rect x=".5" y=".5" width="8" height="8" fill="#fff" stroke="#606060"/><path d="M2 4.500h5M4.500 2v5" stroke="#000" stroke-width="1.200"/></svg>
<svg style="left:74px;top:352px" width="16" height="16" viewBox="0 0 16 16"><rect x="2.500" y="3" width="11.500" height="10" fill="#dde6f5" stroke="#6f82ac" stroke-width="1"/><rect x="3" y="3.500" width="10.500" height="3.500" fill="#7c9ad2"/><path d="M3 9.800h10.500M6.500 7v6M10 7v6" stroke="#a4b6d8" stroke-width=".9"/><path d="M3.500 13.500h10.500" stroke="#56688e" stroke-width=".8"/></svg>
<div class="t" style="left:94.5px;top:354px;">dbo.tblInventoryItems</div>
<svg style="left:59px;top:372px" width="9" height="9" viewBox="0 0 9 9"><rect x=".5" y=".5" width="8" height="8" fill="#fff" stroke="#606060"/><path d="M2 4.500h5M4.500 2v5" stroke="#000" stroke-width="1.200"/></svg>
<svg style="left:74px;top:368px" width="16" height="16" viewBox="0 0 16 16"><rect x="2.500" y="3" width="11.500" height="10" fill="#dde6f5" stroke="#6f82ac" stroke-width="1"/><rect x="3" y="3.500" width="10.500" height="3.500" fill="#7c9ad2"/><path d="M3 9.800h10.500M6.500 7v6M10 7v6" stroke="#a4b6d8" stroke-width=".9"/><path d="M3.500 13.500h10.500" stroke="#56688e" stroke-width=".8"/></svg>
<div class="t" style="left:94.5px;top:370px;">dbo.tblItemCategories</div>
<svg style="left:59px;top:388px" width="9" height="9" viewBox="0 0 9 9"><rect x=".5" y=".5" width="8" height="8" fill="#fff" stroke="#606060"/><path d="M2 4.500h5M4.500 2v5" stroke="#000" stroke-width="1.200"/></svg>
<svg style="left:74px;top:384px" width="16" height="16" viewBox="0 0 16 16"><rect x="2.500" y="3" width="11.500" height="10" fill="#dde6f5" stroke="#6f82ac" stroke-width="1"/><rect x="3" y="3.500" width="10.500" height="3.500" fill="#7c9ad2"/><path d="M3 9.800h10.500M6.500 7v6M10 7v6" stroke="#a4b6d8" stroke-width=".9"/><path d="M3.500 13.500h10.500" stroke="#56688e" stroke-width=".8"/></svg>
<div class="t" style="left:94.5px;top:386px;">dbo.tblItemStockLevels</div>
<svg style="left:59px;top:404px" width="9" height="9" viewBox="0 0 9 9"><rect x=".5" y=".5" width="8" height="8" fill="#fff" stroke="#606060"/><path d="M2 4.500h5M4.500 2v5" stroke="#000" stroke-width="1.200"/></svg>
<svg style="left:74px;top:400px" width="16" height="16" viewBox="0 0 16 16"><rect x="2.500" y="3" width="11.500" height="10" fill="#dde6f5" stroke="#6f82ac" stroke-width="1"/><rect x="3" y="3.500" width="10.500" height="3.500" fill="#7c9ad2"/><path d="M3 9.800h10.500M6.500 7v6M10 7v6" stroke="#a4b6d8" stroke-width=".9"/><path d="M3.500 13.500h10.500" stroke="#56688e" stroke-width=".8"/></svg>
<div class="t" style="left:94.5px;top:402px;">dbo.tblItemSuppliers</div>
<svg style="left:59px;top:420px" width="9" height="9" viewBox="0 0 9 9"><rect x=".5" y=".5" width="8" height="8" fill="#fff" stroke="#606060"/><path d="M2 4.500h5M4.500 2v5" stroke="#000" stroke-width="1.200"/></svg>
<svg style="left:74px;top:416px" width="16" height="16" viewBox="0 0 16 16"><rect x="2.500" y="3" width="11.500" height="10" fill="#dde6f5" stroke="#6f82ac" stroke-width="1"/><rect x="3" y="3.500" width="10.500" height="3.500" fill="#7c9ad2"/><path d="M3 9.800h10.500M6.500 7v6M10 7v6" stroke="#a4b6d8" stroke-width=".9"/><path d="M3.500 13.500h10.500" stroke="#56688e" stroke-width=".8"/></svg>
<div class="t" style="left:94.5px;top:418px;">dbo.tblSupplierAddresses</div>
<svg style="left:59px;top:436px" width="9" height="9" viewBox="0 0 9 9"><rect x=".5" y=".5" width="8" height="8" fill="#fff" stroke="#606060"/><path d="M2 4.500h5" stroke="#000" stroke-width="1.200"/></svg>
<svg style="left:74px;top:432px" width="16" height="16" viewBox="0 0 16 16"><rect x="2.500" y="3" width="11.500" height="10" fill="#dde6f5" stroke="#6f82ac" stroke-width="1"/><rect x="3" y="3.500" width="10.500" height="3.500" fill="#7c9ad2"/><path d="M3 9.800h10.500M6.500 7v6M10 7v6" stroke="#a4b6d8" stroke-width=".9"/><path d="M3.500 13.500h10.500" stroke="#56688e" stroke-width=".8"/></svg>
<div class="t" style="left:94.5px;top:434px;">dbo.tblSuppliers</div>
<svg style="left:78px;top:452px" width="9" height="9" viewBox="0 0 9 9"><rect x=".5" y=".5" width="8" height="8" fill="#fff" stroke="#606060"/><path d="M2 4.500h5" stroke="#000" stroke-width="1.200"/></svg>
<svg style="left:93px;top:448px" width="16" height="16" viewBox="0 0 16 16"><path d="M1 3.500h5.200l1.300 1.800H15V14H1z" fill="url(#gfo)" stroke="#c29a30" stroke-width=".8"/><path d="M1.500 6.200h13" stroke="#fff6cc" stroke-width=".9"/><path d="M1.500 13.600h13.200V6" stroke="#b88620" stroke-width=".9" fill="none"/></svg>
<div class="t" style="left:113.5px;top:450px;">Columns</div>
<svg style="left:112px;top:464px" width="16" height="16" viewBox="0 0 16 16"><circle cx="8" cy="4.500" r="3.300" fill="#f6c840" stroke="#b88a18" stroke-width=".9"/><circle cx="8" cy="3.800" r="1" fill="#fff8d0"/><path d="M7 7.500h2v7l-1 1-1-1z" fill="#e8b030" stroke="#b88a18" stroke-width=".6"/><path d="M9 10.500h1.500M9 12.500h1.500" stroke="#b88a18"/></svg>
<div class="t" style="left:132.5px;top:466px;">SupplierID (PK, int, not null)</div>
<svg style="left:112px;top:480px" width="16" height="16" viewBox="0 0 16 16"><rect x="2.500" y="3" width="11" height="10.500" fill="#bccbe8" stroke="#5873aa" stroke-width="1.300"/><rect x="4.200" y="4.800" width="2.600" height="6.900" fill="#fff"/><rect x="9.200" y="4.800" width="2.600" height="6.900" fill="#fff"/><path d="M6.800 8.200h2.400" stroke="#fff" stroke-width="1.400"/></svg>
<div class="t" style="left:132.5px;top:482px;">SupplierCode (nchar(6), not null)</div>
<svg style="left:112px;top:496px" width="16" height="16" viewBox="0 0 16 16"><rect x="2.500" y="3" width="11" height="10.500" fill="#bccbe8" stroke="#5873aa" stroke-width="1.300"/><rect x="4.200" y="4.800" width="2.600" height="6.900" fill="#fff"/><rect x="9.200" y="4.800" width="2.600" height="6.900" fill="#fff"/><path d="M6.800 8.200h2.400" stroke="#fff" stroke-width="1.400"/></svg>
<div class="t" style="left:132.5px;top:498px;">SupplierName (nvarchar(50), not null)</div>
<svg style="left:112px;top:512px" width="16" height="16" viewBox="0 0 16 16"><rect x="2.500" y="3" width="11" height="10.500" fill="#bccbe8" stroke="#5873aa" stroke-width="1.300"/><rect x="4.200" y="4.800" width="2.600" height="6.900" fill="#fff"/><rect x="9.200" y="4.800" width="2.600" height="6.900" fill="#fff"/><path d="M6.800 8.200h2.400" stroke="#fff" stroke-width="1.400"/></svg>
<div class="t" style="left:132.5px;top:514px;">Email (nvarchar(50), not null)</div>
<svg style="left:112px;top:528px" width="16" height="16" viewBox="0 0 16 16"><rect x="2.500" y="3" width="11" height="10.500" fill="#bccbe8" stroke="#5873aa" stroke-width="1.300"/><rect x="4.200" y="4.800" width="2.600" height="6.900" fill="#fff"/><rect x="9.200" y="4.800" width="2.600" height="6.900" fill="#fff"/><path d="M6.800 8.200h2.400" stroke="#fff" stroke-width="1.400"/></svg>
<div class="t" style="left:132.5px;top:530px;">Phone (nvarchar(20), not null)</div>
<svg style="left:112px;top:544px" width="16" height="16" viewBox="0 0 16 16"><rect x="2.500" y="3" width="11" height="10.500" fill="#bccbe8" stroke="#5873aa" stroke-width="1.300"/><rect x="4.200" y="4.800" width="2.600" height="6.900" fill="#fff"/><rect x="9.200" y="4.800" width="2.600" height="6.900" fill="#fff"/><path d="M6.800 8.200h2.400" stroke="#fff" stroke-width="1.400"/></svg>
<div class="t" style="left:132.5px;top:546px;">Mobile (nvarchar(20), not null)</div>
<svg style="left:112px;top:560px" width="16" height="16" viewBox="0 0 16 16"><rect x="2.500" y="3" width="11" height="10.500" fill="#bccbe8" stroke="#5873aa" stroke-width="1.300"/><rect x="4.200" y="4.800" width="2.600" height="6.900" fill="#fff"/><rect x="9.200" y="4.800" width="2.600" height="6.900" fill="#fff"/><path d="M6.800 8.200h2.400" stroke="#fff" stroke-width="1.400"/></svg>
<div class="t" style="left:132.5px;top:562px;">SupplierLogo (varbinary(max), null)</div>
<svg style="left:112px;top:576px" width="16" height="16" viewBox="0 0 16 16"><rect x="2.500" y="3" width="11" height="10.500" fill="#bccbe8" stroke="#5873aa" stroke-width="1.300"/><rect x="4.200" y="4.800" width="2.600" height="6.900" fill="#fff"/><rect x="9.200" y="4.800" width="2.600" height="6.900" fill="#fff"/><path d="M6.800 8.200h2.400" stroke="#fff" stroke-width="1.400"/></svg>
<div class="t" style="left:132.5px;top:578px;">EnteredDate (datetime, not null)</div>
<svg style="left:112px;top:592px" width="16" height="16" viewBox="0 0 16 16"><rect x="2.500" y="3" width="11" height="10.500" fill="#bccbe8" stroke="#5873aa" stroke-width="1.300"/><rect x="4.200" y="4.800" width="2.600" height="6.900" fill="#fff"/><rect x="9.200" y="4.800" width="2.600" height="6.900" fill="#fff"/><path d="M6.800 8.200h2.400" stroke="#fff" stroke-width="1.400"/></svg>
<div class="t" style="left:132.5px;top:594px;">UpdatedDate (datetime, not null)</div>
<svg style="left:112px;top:608px" width="16" height="16" viewBox="0 0 16 16"><rect x="2.500" y="3" width="11" height="10.500" fill="#bccbe8" stroke="#5873aa" stroke-width="1.300"/><rect x="4.200" y="4.800" width="2.600" height="6.900" fill="#fff"/><rect x="9.200" y="4.800" width="2.600" height="6.900" fill="#fff"/><path d="M6.800 8.200h2.400" stroke="#fff" stroke-width="1.400"/></svg>
<div class="t" style="left:132.5px;top:610px;">RVersion (timestamp, not null)</div>
<div style="left:130px;top:624px;width:141px;height:16px;background:#d4d0c8;"></div>
<svg style="left:112px;top:624px" width="16" height="16" viewBox="0 0 16 16"><rect x="2.500" y="3" width="11" height="10.500" fill="#bccbe8" stroke="#5873aa" stroke-width="1.300"/><rect x="4.200" y="4.800" width="2.600" height="6.900" fill="#fff"/><rect x="9.200" y="4.800" width="2.600" height="6.900" fill="#fff"/><path d="M6.800 8.200h2.400" stroke="#fff" stroke-width="1.400"/></svg>
<div class="t" style="left:132.5px;top:626px;">UserID (nvarchar(20), null)</div>
<svg style="left:78px;top:644px" width="9" height="9" viewBox="0 0 9 9"><rect x=".5" y=".5" width="8" height="8" fill="#fff" stroke="#606060"/><path d="M2 4.500h5M4.500 2v5" stroke="#000" stroke-width="1.200"/></svg>
<svg style="left:93px;top:640px" width="16" height="16" viewBox="0 0 16 16"><path d="M1 3.500h5.200l1.300 1.800H15V14H1z" fill="url(#gfo)" stroke="#c29a30" stroke-width=".8"/><path d="M1.500 6.200h13" stroke="#fff6cc" stroke-width=".9"/><path d="M1.500 13.600h13.200V6" stroke="#b88620" stroke-width=".9" fill="none"/></svg>
<div class="t" style="left:113.5px;top:642px;">Keys</div>
<svg style="left:78px;top:660px" width="9" height="9" viewBox="0 0 9 9"><rect x=".5" y=".5" width="8" height="8" fill="#fff" stroke="#606060"/><path d="M2 4.500h5M4.500 2v5" stroke="#000" stroke-width="1.200"/></svg>
<svg style="left:93px;top:656px" width="16" height="16" viewBox="0 0 16 16"><path d="M1 3.500h5.200l1.300 1.800H15V14H1z" fill="url(#gfo)" stroke="#c29a30" stroke-width=".8"/><path d="M1.500 6.200h13" stroke="#fff6cc" stroke-width=".9"/><path d="M1.500 13.600h13.200V6" stroke="#b88620" stroke-width=".9" fill="none"/></svg>
<div class="t" style="left:113.5px;top:658px;">Constraints</div>
<svg style="left:78px;top:676px" width="9" height="9" viewBox="0 0 9 9"><rect x=".5" y=".5" width="8" height="8" fill="#fff" stroke="#606060"/><path d="M2 4.500h5M4.500 2v5" stroke="#000" stroke-width="1.200"/></svg>
<svg style="left:93px;top:672px" width="16" height="16" viewBox="0 0 16 16"><path d="M1 3.500h5.200l1.300 1.800H15V14H1z" fill="url(#gfo)" stroke="#c29a30" stroke-width=".8"/><path d="M1.500 6.200h13" stroke="#fff6cc" stroke-width=".9"/><path d="M1.500 13.600h13.200V6" stroke="#b88620" stroke-width=".9" fill="none"/></svg>
<div class="t" style="left:113.5px;top:674px;">Triggers</div>
<svg style="left:78px;top:692px" width="9" height="9" viewBox="0 0 9 9"><rect x=".5" y=".5" width="8" height="8" fill="#fff" stroke="#606060"/><path d="M2 4.500h5M4.500 2v5" stroke="#000" stroke-width="1.200"/></svg>
<svg style="left:93px;top:688px" width="16" height="16" viewBox="0 0 16 16"><path d="M1 3.500h5.200l1.300 1.800H15V14H1z" fill="url(#gfo)" stroke="#c29a30" stroke-width=".8"/><path d="M1.500 6.200h13" stroke="#fff6cc" stroke-width=".9"/><path d="M1.500 13.600h13.200V6" stroke="#b88620" stroke-width=".9" fill="none"/></svg>
<div class="t" style="left:113.5px;top:690px;">Indexes</div>
<svg style="left:78px;top:708px" width="9" height="9" viewBox="0 0 9 9"><rect x=".5" y=".5" width="8" height="8" fill="#fff" stroke="#606060"/><path d="M2 4.500h5M4.500 2v5" stroke="#000" stroke-width="1.200"/></svg>
<svg style="left:93px;top:704px" width="16" height="16" viewBox="0 0 16 16"><path d="M1 3.500h5.200l1.300 1.800H15V14H1z" fill="url(#gfo)" stroke="#c29a30" stroke-width=".8"/><path d="M1.500 6.200h13" stroke="#fff6cc" stroke-width=".9"/><path d="M1.500 13.600h13.200V6" stroke="#b88620" stroke-width=".9" fill="none"/></svg>
<div class="t" style="left:113.5px;top:706px;">Statistics</div>
<svg style="left:40px;top:724px" width="9" height="9" viewBox="0 0 9 9"><rect x=".5" y=".5" width="8" height="8" fill="#fff" stroke="#606060"/><path d="M2 4.500h5M4.500 2v5" stroke="#000" stroke-width="1.200"/></svg>
<svg style="left:55px;top:720px" width="16" height="16" viewBox="0 0 16 16"><path d="M1 3.500h5.200l1.300 1.800H15V14H1z" fill="url(#gfo)" stroke="#c29a30" stroke-width=".8"/><path d="M1.500 6.200h13" stroke="#fff6cc" stroke-width=".9"/><path d="M1.500 13.600h13.200V6" stroke="#b88620" stroke-width=".9" fill="none"/></svg>
<div class="t" style="left:75.5px;top:722px;">Views</div>
<svg style="left:40px;top:740px" width="9" height="9" viewBox="0 0 9 9"><rect x=".5" y=".5" width="8" height="8" fill="#fff" stroke="#606060"/><path d="M2 4.500h5M4.500 2v5" stroke="#000" stroke-width="1.200"/></svg>
<svg style="left:55px;top:736px" width="16" height="16" viewBox="0 0 16 16"><path d="M1 3.500h5.200l1.300 1.800H15V14H1z" fill="url(#gfo)" stroke="#c29a30" stroke-width=".8"/><path d="M1.500 6.200h13" stroke="#fff6cc" stroke-width=".9"/><path d="M1.500 13.600h13.200V6" stroke="#b88620" stroke-width=".9" fill="none"/></svg>
<div class="t" style="left:75.5px;top:738px;">Synonyms</div>
<svg style="left:40px;top:756px" width="9" height="9" viewBox="0 0 9 9"><rect x=".5" y=".5" width="8" height="8" fill="#fff" stroke="#606060"/><path d="M2 4.500h5" stroke="#000" stroke-width="1.200"/></svg>
<svg style="left:55px;top:752px" width="16" height="16" viewBox="0 0 16 16"><path d="M1 3.500h5.200l1.300 1.800H15V14H1z" fill="url(#gfo)" stroke="#c29a30" stroke-width=".8"/><path d="M1.500 6.200h13" stroke="#fff6cc" stroke-width=".9"/><path d="M1.500 13.600h13.200V6" stroke="#b88620" stroke-width=".9" fill="none"/></svg>
<div class="t" style="left:75.5px;top:754px;">Programmability</div>
<svg style="left:59px;top:772px" width="9" height="9" viewBox="0 0 9 9"><rect x=".5" y=".5" width="8" height="8" fill="#fff" stroke="#606060"/><path d="M2 4.500h5" stroke="#000" stroke-width="1.200"/></svg>
<svg style="left:74px;top:768px" width="16" height="16" viewBox="0 0 16 16"><path d="M1 3.500h5.200l1.300 1.800H15V14H1z" fill="url(#gfo)" stroke="#c29a30" stroke-width=".8"/><path d="M1.500 6.200h13" stroke="#fff6cc" stroke-width=".9"/><path d="M1.500 13.600h13.200V6" stroke="#b88620" stroke-width=".9" fill="none"/></svg>
<div class="t" style="left:94.5px;top:770px;">Stored Procedures</div>
<svg style="left:78px;top:788px" width="9" height="9" viewBox="0 0 9 9"><rect x=".5" y=".5" width="8" height="8" fill="#fff" stroke="#606060"/><path d="M2 4.500h5M4.500 2v5" stroke="#000" stroke-width="1.200"/></svg>
<svg style="left:93px;top:784px" width="16" height="16" viewBox="0 0 16 16"><path d="M1 3.500h5.200l1.300 1.800H15V14H1z" fill="url(#gfo)" stroke="#c29a30" stroke-width=".8"/><path d="M1.500 6.200h13" stroke="#fff6cc" stroke-width=".9"/><path d="M1.500 13.600h13.200V6" stroke="#b88620" stroke-width=".9" fill="none"/></svg>
<div class="t" style="left:113.5px;top:786px;">System Stored Procedures</div>
<svg style="left:78px;top:804px" width="9" height="9" viewBox="0 0 9 9"><rect x=".5" y=".5" width="8" height="8" fill="#fff" stroke="#606060"/><path d="M2 4.500h5M4.500 2v5" stroke="#000" stroke-width="1.200"/></svg>
<svg style="left:93px;top:800px" width="16" height="16" viewBox="0 0 16 16"><rect x="2" y="2.500" width="12" height="12" fill="#eaf0fa" stroke="#4a6ab0"/><rect x="2.500" y="3" width="11" height="2.500" fill="#4a72c8"/><path d="M4 8h5M4 10h7M4 12h4" stroke="#4a6ab0" stroke-width=".9"/></svg>
<div class="t" style="left:113.5px;top:802px;transform:scaleX(0.96);transform-origin:0 0;">dbo.SPGetAllSuppliers</div>
</div>
<div style="left:311px;top:94px;width:946px;height:878px;background:#d4d0c8;"></div>
<div style="left:311px;top:94px;width:946px;height:1px;background:#808080;"></div>
<div style="left:311px;top:94px;width:1px;height:615px;background:#808080;"></div>
<div style="left:1255px;top:94px;width:2px;height:878px;background:#808080;opacity:.75;"></div>
<div style="left:312px;top:113px;width:943px;height:1px;background:#7a7870;"></div>
<svg style="left:318px;top:96px" width="143" height="18" viewBox="0 0 143 18"><path d="M0 18L16 3.500Q18 1 22 .8H140Q142.5 .8 142.5 3.500V18" fill="#e6e4de" stroke="#7a7870" stroke-width="1"/></svg>
<div class="t" style="left:338px;top:98px;color:#000;">Table - dbo.tblSuppliers</div>
<svg style="left:462px;top:96px" width="140" height="18" viewBox="0 0 140 18"><path d="M0 18L16 3.500Q18 1 22 .8H137Q139.5 .8 139.5 3.500V18" fill="#e6e4de" stroke="#7a7870" stroke-width="1"/></svg>
<div class="t" style="left:480px;top:98px;color:#000;">Table - dbo.tblSuppliers</div>
<svg style="left:794px;top:96px" width="64" height="18" viewBox="0 0 64 18"><path d="M.5 18V5Q.5 .8 5 .8H61Q63.500 .8 63.500 3.500V18" fill="#e6e4de" stroke="#7a7870"/></svg>
<div class="t" style="left:803px;top:98px;color:#000;">Summary</div>
<svg style="left:601px;top:96px" width="191" height="18" viewBox="0 0 191 18"><path d="M0 18L16 3.500Q18 1 22 .8H188Q190.5 .8 190.5 3.500V18" fill="#fff" stroke="#7a7870" stroke-width="1"/></svg>
<div class="t" style="left:610px;top:98px;font-weight:bold;font-size:11.400px;color:#000;">NEXTELL-013636...Syscripts.sql*</div>
<div style="left:617px;top:113px;width:174px;height:1.5px;background:#fff;"></div>
<svg style="left:1221px;top:100px" width="32" height="11" viewBox="0 0 32 11"><path d="M1 3.500h9l-4.500 4.500z" fill="#000"/><path d="M20.500 1.500l8 8M28.500 1.500l-8 8" stroke="#000" stroke-width="2"/></svg>
<div style="left:314px;top:114px;width:924px;height:575px;background:#fff;"></div>
<div style="left:314px;top:114px;width:17px;height:575px;background:#d6d3cb;"></div>
<div class="track" style="left:1238px;top:114px;width:16px;height:575px;"></div>
<div class="sbtn" style="left:1238px;top:114px;width:16px;height:6px;"></div>
<div class="sbtn" style="left:1238px;top:120px;width:16px;height:16px;"></div>
<div class="sbtn" style="left:1238px;top:673px;width:16px;height:16px;"></div>
<div class="sbtn" style="left:1238px;top:422px;width:16px;height:60px;"></div>
<svg style="left:1242px;top:126px" width="8" height="5" viewBox="0 0 8 5"><path d="M0.500 4.500h7l-3.500-4z" fill="#000"/></svg>
<svg style="left:1242px;top:679px" width="8" height="5" viewBox="0 0 8 5"><path d="M0.500 0.500h7l-3.500 4z" fill="#000"/></svg>
<div class="track" style="left:314px;top:689px;width:924px;height:16px;"></div>
<div class="sbtn" style="left:314px;top:689px;width:16px;height:16px;"></div>
<div class="sbtn" style="left:1222px;top:689px;width:16px;height:16px;"></div>
<div class="sbtn" style="left:330px;top:689px;width:680px;height:16px;"></div>
<svg style="left:319px;top:693px" width="5" height="8" viewBox="0 0 5 8"><path d="M4.500 0.500v7l-4-3.500z" fill="#000"/></svg>
<svg style="left:1228px;top:693px" width="5" height="8" viewBox="0 0 5 8"><path d="M0.500 0.500v7l4-3.500z" fill="#000"/></svg>
<div style="left:1238px;top:689px;width:16px;height:16px;background:#d4d0c8;"></div>
<div style="left:314px;top:114px;width:924px;height:575px;overflow:hidden;">
<div class="m" style="left:21px;top:0px;width:35px;height:17px;line-height:17px;font-size:13.333px;text-align:right;color:#5c9cb0;">155</div>
<div style="left:58px;top:0px;width:5px;height:17.4px;background:#4ccc4c;"></div>
<div class="m code" style="left:72.750px;top:0px;height:17px;line-height:17px;font-size:13.333px;">    <span class="k">begin try</span></div>
<div class="m" style="left:21px;top:17px;width:35px;height:17px;line-height:17px;font-size:13.333px;text-align:right;color:#5c9cb0;">156</div>
<div style="left:58px;top:17px;width:5px;height:17.4px;background:#ece954;"></div>
<div class="m code" style="left:72.750px;top:17px;height:17px;line-height:17px;font-size:13.333px;">            <span class="k">update</span> tblSuppliers</div>
<div class="m" style="left:21px;top:34px;width:35px;height:17px;line-height:17px;font-size:13.333px;text-align:right;color:#5c9cb0;">157</div>
<div style="left:58px;top:34px;width:5px;height:17.4px;background:#ece954;"></div>
<div class="m code" style="left:72.750px;top:34px;height:17px;line-height:17px;font-size:13.333px;">            <span class="k">set</span> SupplierName <span class="g">=</span> <span class="f">UPPER</span><span class="g">(</span>@PSupplierName<span class="g">),</span></div>
<div class="m" style="left:21px;top:51px;width:35px;height:17px;line-height:17px;font-size:13.333px;text-align:right;color:#5c9cb0;">158</div>
<div style="left:58px;top:51px;width:5px;height:17.4px;background:#ece954;"></div>
<div class="m code" style="left:72.750px;top:51px;height:17px;line-height:17px;font-size:13.333px;">                Email <span class="g">=</span> @PEmail<span class="g">,</span></div>
<div class="m" style="left:21px;top:68px;width:35px;height:17px;line-height:17px;font-size:13.333px;text-align:right;color:#5c9cb0;">159</div>
<div style="left:58px;top:68px;width:5px;height:17.4px;background:#ece954;"></div>
<div class="m code" style="left:72.750px;top:68px;height:17px;line-height:17px;font-size:13.333px;">                Phone <span class="g">=</span> @PPhone<span class="g">,</span></div>
<div class="m" style="left:21px;top:85px;width:35px;height:17px;line-height:17px;font-size:13.333px;text-align:right;color:#5c9cb0;">160</div>
<div style="left:58px;top:85px;width:5px;height:17.4px;background:#ece954;"></div>
<div class="m code" style="left:72.750px;top:85px;height:17px;line-height:17px;font-size:13.333px;">                Mobile <span class="g">=</span> @PMobile<span class="g">,</span></div>
<div class="m" style="left:21px;top:102px;width:35px;height:17px;line-height:17px;font-size:13.333px;text-align:right;color:#5c9cb0;">161</div>
<div style="left:58px;top:102px;width:5px;height:17.4px;background:#ece954;"></div>
<div class="m code" style="left:72.750px;top:102px;height:17px;line-height:17px;font-size:13.333px;">                SupplierLogo <span class="g">=</span> @PSupplierLogo<span class="g">,</span></div>
<div class="m" style="left:21px;top:119px;width:35px;height:17px;line-height:17px;font-size:13.333px;text-align:right;color:#5c9cb0;">162</div>
<div style="left:58px;top:119px;width:5px;height:17.4px;background:#ece954;"></div>
<div class="m code" style="left:72.750px;top:119px;height:17px;line-height:17px;font-size:13.333px;">                UserID <span class="g">=</span> @POldUserID</div>
<div class="m" style="left:21px;top:136px;width:35px;height:17px;line-height:17px;font-size:13.333px;text-align:right;color:#5c9cb0;">163</div>
<div style="left:58px;top:136px;width:5px;height:17.4px;background:#ece954;"></div>
<div class="m code" style="left:72.750px;top:136px;height:17px;line-height:17px;font-size:13.333px;">            <span class="k">WHERE</span>   SupplierCode <span class="g">=</span> <span class="f">UPPER</span><span class="g">(</span>@PSupplierCode<span class="g">)</span></div>
<div class="m" style="left:21px;top:153px;width:35px;height:17px;line-height:17px;font-size:13.333px;text-align:right;color:#5c9cb0;">164</div>
<div style="left:58px;top:153px;width:5px;height:17.4px;background:#ece954;"></div>
<div class="m code" style="left:72.750px;top:153px;height:17px;line-height:17px;font-size:13.333px;">                    <span class="g">and</span> RVersion <span class="g">=</span> @POldRowVersion</div>
<div class="m" style="left:21px;top:170px;width:35px;height:17px;line-height:17px;font-size:13.333px;text-align:right;color:#5c9cb0;">165</div>
<div style="left:58px;top:170px;width:5px;height:17.4px;background:#ece954;"></div>
<div class="m code" style="left:72.750px;top:170px;height:17px;line-height:17px;font-size:13.333px;">                    <span class="g">and</span> userID <span class="g">=</span> @POldUserID <span class="c">-- this condition fails to update correctly if the same user changes</span></div>
<div class="m" style="left:21px;top:187px;width:35px;height:17px;line-height:17px;font-size:13.333px;text-align:right;color:#5c9cb0;">166</div>
<div style="left:58px;top:187px;width:5px;height:17.4px;background:#ece954;"></div>
<div class="m" style="left:21px;top:204px;width:35px;height:17px;line-height:17px;font-size:13.333px;text-align:right;color:#5c9cb0;">167</div>
<div style="left:58px;top:204px;width:5px;height:17.4px;background:#4ccc4c;"></div>
<div class="m" style="left:21px;top:221px;width:35px;height:17px;line-height:17px;font-size:13.333px;text-align:right;color:#5c9cb0;">168</div>
<div style="left:58px;top:221px;width:5px;height:17.4px;background:#4ccc4c;"></div>
<div class="m code" style="left:72.750px;top:221px;height:17px;line-height:17px;font-size:13.333px;">        <span class="c">-- I NEED TO CHECK FOR THE ROWVERSION becase it chages even if another modifies teh record.</span></div>
<div class="m" style="left:21px;top:238px;width:35px;height:17px;line-height:17px;font-size:13.333px;text-align:right;color:#5c9cb0;">169</div>
<div style="left:58px;top:238px;width:5px;height:17.4px;background:#ece954;"></div>
<div class="m code" style="left:72.750px;top:238px;height:17px;line-height:17px;font-size:13.333px;">        <span class="k">IF</span>  <span class="f">@@ROWCOUNT</span> <span class="g">=</span> 0 <span class="g">AND</span> UserID <span class="g">=</span> @POldUserID</div>
<div class="m" style="left:21px;top:255px;width:35px;height:17px;line-height:17px;font-size:13.333px;text-align:right;color:#5c9cb0;">170</div>
<div style="left:58px;top:255px;width:5px;height:17.4px;background:#4ccc4c;"></div>
<div class="m code" style="left:72.750px;top:255px;height:17px;line-height:17px;font-size:13.333px;">            <span class="k">BEGIN</span></div>
<div class="m" style="left:21px;top:272px;width:35px;height:17px;line-height:17px;font-size:13.333px;text-align:right;color:#5c9cb0;">171</div>
<div style="left:58px;top:272px;width:5px;height:17.4px;background:#4ccc4c;"></div>
<div class="m code" style="left:72.750px;top:272px;height:17px;line-height:17px;font-size:13.333px;">                <span class="k">IF</span> <span class="g">NOT EXISTS (</span><span class="k">select</span> 1 <span class="k">from</span> tblSuppliers <span class="k">where</span> SupplierCode <span class="g">=</span> @PSupplierCode<span class="g">)</span></div>
<div class="m" style="left:21px;top:289px;width:35px;height:17px;line-height:17px;font-size:13.333px;text-align:right;color:#5c9cb0;">172</div>
<div style="left:58px;top:289px;width:5px;height:17.4px;background:#4ccc4c;"></div>
<div class="m code" style="left:72.750px;top:289px;height:17px;line-height:17px;font-size:13.333px;">                <span class="k">begin</span></div>
<div class="m" style="left:21px;top:306px;width:35px;height:17px;line-height:17px;font-size:13.333px;text-align:right;color:#5c9cb0;">173</div>
<div style="left:58px;top:306px;width:5px;height:17.4px;background:#4ccc4c;"></div>
<div class="m code" style="left:72.750px;top:306px;height:17px;line-height:17px;font-size:13.333px;">                    <span class="k">set</span> @PResult <span class="g">=</span> 3<span class="g">;</span></div>
<div class="m" style="left:21px;top:323px;width:35px;height:17px;line-height:17px;font-size:13.333px;text-align:right;color:#5c9cb0;">174</div>
<div style="left:58px;top:323px;width:5px;height:17.4px;background:#4ccc4c;"></div>
<div class="m code" style="left:72.750px;top:323px;height:17px;line-height:17px;font-size:13.333px;">                    <span class="k">set</span> @PErrMsg <span class="g">=</span> <span class="s">'DB Concurrency violation Occured: Record has been DELTED by another user.'</span></div>
<div class="m" style="left:21px;top:340px;width:35px;height:17px;line-height:17px;font-size:13.333px;text-align:right;color:#5c9cb0;">175</div>
<div style="left:58px;top:340px;width:5px;height:17.4px;background:#4ccc4c;"></div>
<div class="m code" style="left:72.750px;top:340px;height:17px;line-height:17px;font-size:13.333px;">                    <span class="k">SELECT</span> @PResult<span class="g">,</span> @PErrMsg</div>
<div class="m" style="left:21px;top:357px;width:35px;height:17px;line-height:17px;font-size:13.333px;text-align:right;color:#5c9cb0;">176</div>
<div style="left:58px;top:357px;width:5px;height:17.4px;background:#4ccc4c;"></div>
<div class="m code" style="left:72.750px;top:357px;height:17px;line-height:17px;font-size:13.333px;">                <span class="k">end</span></div>
<div class="m" style="left:21px;top:374px;width:35px;height:17px;line-height:17px;font-size:13.333px;text-align:right;color:#5c9cb0;">177</div>
<div style="left:58px;top:374px;width:5px;height:17.4px;background:#4ccc4c;"></div>
<div class="m code" style="left:72.750px;top:374px;height:17px;line-height:17px;font-size:13.333px;">                <span class="k">else</span></div>
<div class="m" style="left:21px;top:391px;width:35px;height:17px;line-height:17px;font-size:13.333px;text-align:right;color:#5c9cb0;">178</div>
<div style="left:58px;top:391px;width:5px;height:17.4px;background:#4ccc4c;"></div>
<div class="m code" style="left:72.750px;top:391px;height:17px;line-height:17px;font-size:13.333px;">                <span class="k">begin</span></div>
<div class="m" style="left:21px;top:408px;width:35px;height:17px;line-height:17px;font-size:13.333px;text-align:right;color:#5c9cb0;">179</div>
<div style="left:58px;top:408px;width:5px;height:17.4px;background:#4ccc4c;"></div>
<div class="m code" style="left:72.750px;top:408px;height:17px;line-height:17px;font-size:13.333px;">                    <span class="k">set</span> @PResult <span class="g">=</span> 3<span class="g">;</span></div>
<div class="m" style="left:21px;top:425px;width:35px;height:17px;line-height:17px;font-size:13.333px;text-align:right;color:#5c9cb0;">180</div>
<div style="left:58px;top:425px;width:5px;height:17.4px;background:#4ccc4c;"></div>
<div class="m code" style="left:72.750px;top:425px;height:17px;line-height:17px;font-size:13.333px;">                    <span class="k">set</span> @PErrMsg <span class="g">=</span> <span class="s">'DB Concurrency violation Occured: Record has been modified by another user.'</span></div>
<div class="m" style="left:21px;top:442px;width:35px;height:17px;line-height:17px;font-size:13.333px;text-align:right;color:#5c9cb0;">181</div>
<div style="left:58px;top:442px;width:5px;height:17.4px;background:#4ccc4c;"></div>
<div class="m code" style="left:72.750px;top:442px;height:17px;line-height:17px;font-size:13.333px;">                    <span class="k">SELECT</span> @PResult<span class="g">,</span> @PErrMsg</div>
<div class="m" style="left:21px;top:459px;width:35px;height:17px;line-height:17px;font-size:13.333px;text-align:right;color:#5c9cb0;">182</div>
<div style="left:58px;top:459px;width:5px;height:17.4px;background:#4ccc4c;"></div>
<div class="m code" style="left:72.750px;top:459px;height:17px;line-height:17px;font-size:13.333px;">                <span class="k">end</span></div>
<div class="m" style="left:21px;top:476px;width:35px;height:17px;line-height:17px;font-size:13.333px;text-align:right;color:#5c9cb0;">183</div>
<div style="left:58px;top:476px;width:5px;height:17.4px;background:#4ccc4c;"></div>
<div class="m code" style="left:72.750px;top:476px;height:17px;line-height:17px;font-size:13.333px;">            <span class="k">END</span></div>
<div class="m" style="left:21px;top:493px;width:35px;height:17px;line-height:17px;font-size:13.333px;text-align:right;color:#5c9cb0;">184</div>
<div style="left:58px;top:493px;width:5px;height:17.4px;background:#ece954;"></div>
<div class="m code" style="left:72.750px;top:493px;height:17px;line-height:17px;font-size:13.333px;">        <span class="k">ELSE IF</span> <span class="f">@@ROWCOUNT</span> <span class="g">=</span> 0 <span class="g">AND</span> UserID <span class="g">=</span> @POldUserID     <span class="c">-- trying override record saved by current user</span></div>
<div class="m" style="left:21px;top:510px;width:35px;height:17px;line-height:17px;font-size:13.333px;text-align:right;color:#5c9cb0;">185</div>
<div style="left:58px;top:510px;width:5px;height:17.4px;background:#4ccc4c;"></div>
<div class="m code" style="left:72.750px;top:510px;height:17px;line-height:17px;font-size:13.333px;">            <span class="k">BEGIN</span></div>
<div class="m" style="left:21px;top:527px;width:35px;height:17px;line-height:17px;font-size:13.333px;text-align:right;color:#5c9cb0;">186</div>
<div style="left:58px;top:527px;width:5px;height:17.4px;background:#4ccc4c;"></div>
<div class="m code" style="left:72.750px;top:527px;height:17px;line-height:17px;font-size:13.333px;">            <span class="k">IF</span> <span class="g">NOT EXISTS (</span><span class="k">select</span> 1 <span class="k">from</span> tblSuppliers <span class="k">where</span> SupplierCode <span class="g">=</span> @PSupplierCode<span class="g">)</span></div>
<div class="m" style="left:21px;top:544px;width:35px;height:17px;line-height:17px;font-size:13.333px;text-align:right;color:#5c9cb0;">187</div>
<div style="left:58px;top:544px;width:5px;height:17.4px;background:#4ccc4c;"></div>
<div class="m code" style="left:72.750px;top:544px;height:17px;line-height:17px;font-size:13.333px;">                <span class="k">begin</span></div>
<div class="m" style="left:21px;top:561px;width:35px;height:17px;line-height:17px;font-size:13.333px;text-align:right;color:#5c9cb0;">188</div>
<div style="left:58px;top:561px;width:5px;height:17.4px;background:#4ccc4c;"></div>
<div class="m code" style="left:72.750px;top:561px;height:17px;line-height:17px;font-size:13.333px;">                    <span class="k">set</span> @PResult <span class="g">=</span> 3<span class="g">;</span></div>
<div style="left:232.75px;top:375px;width:1.3px;height:15px;background:#000;"></div>
</div>
<div style="left:312px;top:705px;width:943px;height:1px;background:#808080;"></div>
<div style="left:316px;top:712px;width:69px;height:22px;background:#dcd9d1;border-top:1px solid #f0eeea;border-left:1px solid #f0eeea;"></div>
<div style="left:385px;top:711px;width:84px;height:23px;background:#e4e1da;border:1px solid;border-color:#fff #404040 transparent #fff;box-shadow:inset -1px 0 0 #808080;"></div>
<svg style="left:321.0px;top:714.0px" width="16" height="16" viewBox="0 0 16 16"><rect x="1.500" y="2.500" width="13" height="11" fill="#fff" stroke="#4a6ab0"/><rect x="2" y="3" width="12" height="2.500" fill="#4a72c8"/><path d="M2 8.500h12M2 11h12M6 5.500v8M10 5.500v8" stroke="#6a8ad0" stroke-width=".9"/></svg>
<div class="t" style="left:342px;top:715px;color:#000;">Results</div>
<svg style="left:391.0px;top:713.0px" width="16" height="16" viewBox="0 0 16 16"><path d="M2.500 2h6l2 2v7h-8z" fill="#fff" stroke="#7a7a7a" stroke-width=".8"/><path d="M6 6h7v8H6z" fill="#f4f2e8" stroke="#7a7a7a" stroke-width=".8"/><path d="M4 5h3M4 7h2" stroke="#9a9a9a" stroke-width=".7"/><path d="M3 12l3 0" stroke="#e0b020" stroke-width="1.500"/></svg>
<div class="t" style="left:412px;top:715px;color:#000;">Messages</div>
<div style="left:316px;top:734px;width:938px;height:207.5px;background:#fff;"></div>
<div style="left:316px;top:734px;width:2.5px;height:207.5px;background:#8a8a88;"></div>
<div style="left:316px;top:733px;width:938px;height:1px;background:#fff;"></div>
<div class="track" style="left:1234px;top:734px;width:17px;height:190.5px;"></div>
<div class="sbtn" style="left:1234px;top:734px;width:17px;height:16px;"></div>
<div class="sbtn" style="left:1234px;top:908.5px;width:17px;height:16px;"></div>
<svg style="left:1238.500px;top:740px" width="8" height="5" viewBox="0 0 8 5"><path d="M0.500 4.500h7l-3.500-4z" fill="#8a8a84"/></svg>
<svg style="left:1238.500px;top:914.500px" width="8" height="5" viewBox="0 0 8 5"><path d="M0.500 0.500h7l-3.500 4z" fill="#8a8a84"/></svg>
<div class="track" style="left:318px;top:924.5px;width:916px;height:16px;"></div>
<div class="sbtn" style="left:318px;top:924.5px;width:16px;height:16px;"></div>
<div class="sbtn" style="left:1218px;top:924.5px;width:16px;height:16px;"></div>
<svg style="left:324px;top:928.500px" width="5" height="8" viewBox="0 0 5 8"><path d="M4.500 0.500v7l-4-3.500z" fill="#8a8a84"/></svg>
<svg style="left:1224px;top:928.500px" width="5" height="8" viewBox="0 0 5 8"><path d="M0.500 0.500v7l4-3.500z" fill="#8a8a84"/></svg>
<div style="left:1234px;top:924.5px;width:17px;height:16px;background:#d4d0c8;"></div>
<div style="left:1251px;top:734px;width:3px;height:207.5px;background:#8a8a84;opacity:.6;"></div>
<div style="left:316px;top:940.5px;width:938px;height:2.5px;background:#85857f;opacity:.85;"></div>
<div style="left:330px;top:734px;width:7.0px;height:15.6px;background:#8a8a8a;"></div>
<div style="left:330px;top:749px;width:139.74px;height:15.6px;background:#8a8a8a;"></div>
<div class="m" style="left:330px;top:749.7px;height:15px;line-height:15px;font-size:11.600px;color:#e2e2e2;">(4 row(s) affected)</div>
<div style="left:330px;top:764px;width:447.94px;height:15.6px;background:#8a8a8a;"></div>
<div class="m" style="left:330px;top:764.7px;height:15px;line-height:15px;font-size:11.600px;color:#e2e2e2;">Msg 207, Level 16, State 1, Procedure SPUpdateSuppliers, Line 30</div>
<div style="left:330px;top:779px;width:210.34px;height:15.6px;background:#8a8a8a;"></div>
<div class="m" style="left:330px;top:779.7px;height:15px;line-height:15px;font-size:11.600px;color:#e2e2e2;">Invalid column name &#x27;UserID&#x27;.</div>
<div style="left:330px;top:794px;width:447.94px;height:15.6px;background:#8a8a8a;"></div>
<div class="m" style="left:330px;top:794.7px;height:15px;line-height:15px;font-size:11.600px;color:#e2e2e2;">Msg 207, Level 16, State 1, Procedure SPUpdateSuppliers, Line 45</div>
<div style="left:330px;top:809px;width:204.34px;height:15px;background:#8a8a8a;"></div>
<div class="m" style="left:330px;top:809.7px;height:15px;line-height:15px;font-size:11.600px;color:#e2e2e2;">Invalid column name &#x27;UserID&#x27;.</div>
<div style="left:313px;top:944px;width:941px;height:27px;background:#d7d4cc;"></div>
<div style="left:313px;top:944px;width:941px;height:1px;background:#fff;"></div>
<svg style="left:319px;top:950px" width="16" height="15" viewBox="0 0 16 15"><path d="M8 1L15 14H1z" fill="#f8e040" stroke="#c8a810" stroke-width=".9" stroke-linejoin="round"/><path d="M8 5v5" stroke="#000" stroke-width="1.600"/><circle cx="8" cy="12" r="1" fill="#000"/></svg>
<div class="t" style="left:337px;top:951px;font-size:10.900px;color:#000;">Query completed with errors.</div>
<div style="left:628px;top:947px;width:1px;height:22px;background:#8a8880;"></div>
<div style="left:629px;top:947px;width:1px;height:22px;background:#fff;"></div>
<div style="left:871px;top:947px;width:1px;height:22px;background:#8a8880;"></div>
<div style="left:872px;top:947px;width:1px;height:22px;background:#fff;"></div>
<div style="left:1064px;top:947px;width:1px;height:22px;background:#8a8880;"></div>
<div style="left:1065px;top:947px;width:1px;height:22px;background:#fff;"></div>
<div style="left:1152px;top:947px;width:1px;height:22px;background:#8a8880;"></div>
<div style="left:1153px;top:947px;width:1px;height:22px;background:#fff;"></div>
<div style="left:1208px;top:947px;width:1px;height:22px;background:#8a8880;"></div>
<div style="left:1209px;top:947px;width:1px;height:22px;background:#fff;"></div>
<div class="t" style="left:632px;top:951px;font-size:10.900px;color:#000;">NEXTELL-0136367\SQLEXPRESS (9.0 SP2)</div>
<div class="t" style="left:875px;top:951px;font-size:10.900px;color:#000;">NEXTELL-0136367\HPUSER1 (55)</div>
<div class="t" style="left:1067px;top:951px;font-size:10.500px;color:#000;">RetailsSysV10</div>
<div class="t" style="left:1155px;top:951px;font-size:10.900px;color:#000;">00:00:00</div>
<div class="t" style="left:1211px;top:951px;font-size:10.900px;color:#000;">4 rows</div>
<div style="left:313px;top:970px;width:942px;height:1px;background:#8a8880;"></div>
</div></div>
</body></html>
